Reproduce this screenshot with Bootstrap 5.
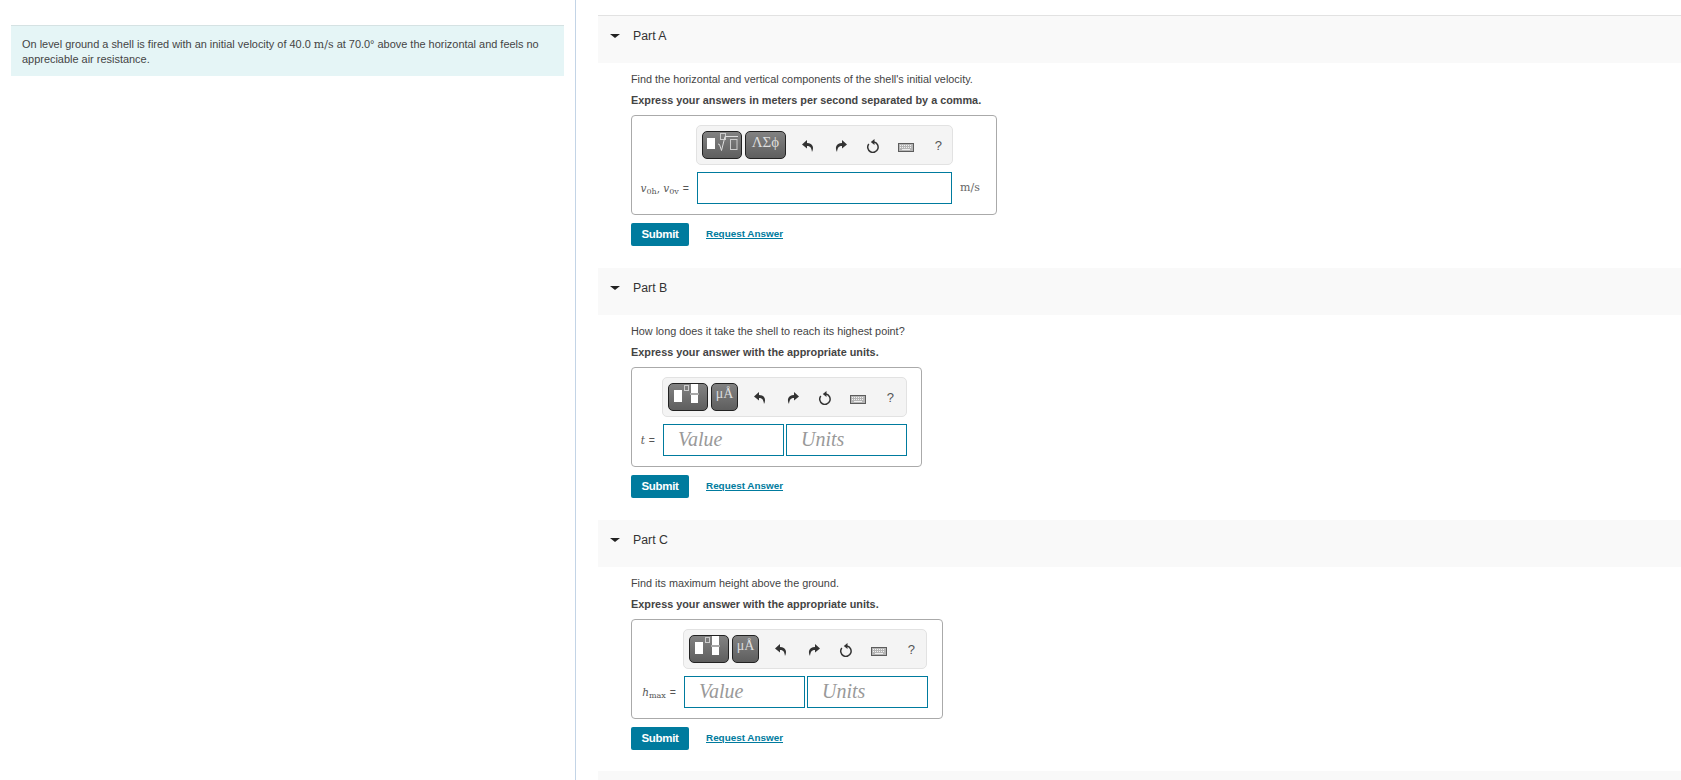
<!DOCTYPE html>
<html lang="en">
<head>
    <meta charset="UTF-8">
    <meta name="viewport" content="width=device-width, initial-scale=1.0">
    <title>Part A</title>
    <link rel="stylesheet" href="https://cdn.jsdelivr.net/npm/bootstrap@5.3.0/dist/css/bootstrap.min.css">
    <style>
        html, body { height: 100%; overflow: hidden; }
        body { font-family: "Liberation Sans", Arial, sans-serif; font-size: 12px; line-height: 16px; color: #333; background: #fff; }
        .sheet { height: 780px; }
        .left-pane { width: 576px; flex: none; padding: 25px 11px 0; border-right: 1px solid #c3d4e6; }
        .intro { background: #e5f5f6; border-top: 1px solid #d5e2e3; padding: 11px 11px 9px; height: 51px; color: #444; font-size: 10.95px; line-height: 14px; }
        .right-pane { flex: 1 1 auto; padding: 15px 0 0 22px; min-width: 0; }
        .first-part { border-top: 1px solid #e2e2e2; }
        .part-head { background: #f9f9f9; height: 47px; padding: 0 0 8px 12px; font-size: 12.3px; }
        .caret-down { width: 0; height: 0; border-left: 5px solid transparent; border-right: 5px solid transparent; border-top: 4.5px solid #222; margin-right: 13px; }
        .part-body { padding: 8px 0 22px 33px; }
        .part-body.tight { padding-bottom: 21px; }
        .part-body p { margin: 0 0 5px; font-size: 10.85px; color: #444; }
        .part-body p.how { font-weight: 700; margin-bottom: 6px; }
        .answer-box { border: 1px solid #aaa; border-radius: 4px; padding: 9px 0 10px 0; margin-top: 7px; }
        .answer-a { width: 366px; }
        .answer-b { width: 291px; }
        .answer-c { width: 312px; }
        .tools { height: 40px; width: 257px; background: #f4f4f4; border: 1px solid #e2e2e2; border-radius: 5px; padding: 0 5px; }
        .answer-a .tools { margin-left: 64px; }
        .answer-b .tools { width: 245px; margin-left: 30px; }
        .answer-c .tools { width: 244px; margin-left: 51px; }
        .tpl-btn { height: 28px; width: 40px; padding: 0; border: 1px solid #222; border-radius: 5px; background: linear-gradient(#828282, #5e5e5e); display: flex; align-items: flex-start; justify-content: center; color: #ddd; font-family: "Liberation Serif", serif; font-size: 15px; line-height: 20px; margin-right: 3px; flex: none; }
        .tpl-btn.narrow { width: 27px; font-size: 14px; }
        .tpl-btn.wide { width: 41px; }
        .tool-icons { margin-left: 3px; padding-top: 2px; }
        .tool-slot { width: 32.5px; flex: none; }
        .tool-slot svg { display: block; }
        .kb-icon { margin-top: 3px; }
        .tool-q { font-size: 13px; color: #555; }
        .ans-row { margin-top: 7px; }
        .ans-label { font-family: "DejaVu Serif", serif; font-size: 10.5px; color: #555; text-align: right; padding-right: 8px; white-space: nowrap; flex: none; }
        .ans-label sub { font-size: 8px; bottom: -.25em; font-style: normal; }
        .ans-eq { font-family: "Liberation Sans", sans-serif; margin-left: 4px; }
        .label-a { width: 65px; }
        .label-b { width: 31px; }
        .label-c { width: 52px; }
        .ans-input { height: 32px; border: 1px solid #007b9e; border-radius: 0; padding: 0 14px; font-family: "Liberation Serif", serif; font-style: italic; font-size: 20px; line-height: 28px; color: #999; background: #fff; flex: none; }
        .ans-input.whole { width: 255px; }
        .ans-input.half { width: 121px; }
        .ans-input.half + .ans-input.half { margin-left: 2px; }
        .ans-unit { font-family: "DejaVu Serif", serif; font-size: 11px; color: #666; margin-left: 8px; }
        .submit-btn { background: #007b9e; border: 0; border-radius: 2px; color: #fff; font-size: 11.5px; font-weight: 700; letter-spacing: -.3px; line-height: 16px; padding: 3px 0 5px; width: 58px; height: 23px; }
        .submit-btn:hover { background: #00698a; color: #fff; }
        .req-link { color: #007b9e; font-weight: 700; font-size: 9.9px; margin: 0 0 2px 17px; text-decoration: underline; }
        .math { font-family: "DejaVu Serif", serif; font-size: 11px; }
    </style>
</head>
<body>

    <!-- shared toolbar icons -->
    <svg width="0" height="0" class="position-absolute">
        <symbol id="ic-undo" viewBox="0 0 12 12"><path d="M5 0 0 4.500 5 8.500V6C8 6 9.500 7.500 10 12 12 8.500 11.500 3 5 3z" fill="#333"/></symbol>
        <symbol id="ic-redo" viewBox="0 0 12 12"><path d="M7 0l5 4.500L7 8.500V6C4 6 2.500 7.500 2 12 0 8.500 .5 3 7 3z" fill="#333"/></symbol>
        <symbol id="ic-reset" viewBox="0 0 14 14"><path d="M8 3.100A5.200 5.200 0 1 1 2.800 5" fill="none" stroke="#333" stroke-width="1.500"/><path d="M8.500 0v6L4.800 3z" fill="#333"/></symbol>
        <symbol id="ic-keys" viewBox="0 0 16 9"><rect x=".5" y=".5" width="15" height="8" fill="#b5b5b5" stroke="#5c5c5c"/><path d="M2 2.500h12M2 4.500h12" stroke="#f2f2f2" stroke-width="1" stroke-dasharray="1 1"/><path d="M4 6.500h8" stroke="#eee"/></symbol>
        <symbol id="ic-radical" viewBox="0 0 38 26"><rect x="4" y="6" width="8" height="11" fill="#fff"/><rect x="17.500" y="1.500" width="5" height="6" fill="none" stroke="#ccc"/><path d="M15 12l1.500 .5 2 6 3.500-14h13" fill="none" stroke="#ddd"/><rect x="27.500" y="7.500" width="6.500" height="10" fill="none" stroke="#ccc"/></symbol>
        <symbol id="ic-frac" viewBox="0 0 38 26"><rect x="5" y="6" width="8" height="12" fill="#fff"/><rect x="15.500" y="1.500" width="4" height="5" fill="none" stroke="#ccc"/><rect x="22" y="0" width="7" height="9" fill="#fff"/><path d="M21 10h9" stroke="#ddd"/><rect x="22" y="11" width="7" height="8" fill="#fff"/></symbol>
    </svg>

    <div class="d-flex sheet">
        <div class="left-pane">
            <div class="intro">On level ground a shell is fired with an initial velocity of 40.0 <span class="math">m/s</span> at 70.0° above the horizontal and feels no appreciable air resistance.</div>
        </div>

        <div class="right-pane">

            <!-- Part A -->
            <div class="first-part">
                <div class="part-head d-flex align-items-center"><span class="caret-down"></span><span>Part A</span></div>
                <div class="part-body">
                    <p>Find the horizontal and vertical components of the shell's initial velocity.</p>
                    <p class="how">Express your answers in meters per second separated by a comma.</p>
                    <div class="answer-box answer-a">
                        <div class="tools d-flex align-items-center">
                            <button type="button" class="tpl-btn"><svg width="38" height="26"><use href="#ic-radical"/></svg></button>
                            <button type="button" class="tpl-btn wide">ΛΣϕ</button>
                            <div class="tool-icons d-flex align-items-center">
                                <div class="tool-slot d-flex justify-content-center"><svg width="12" height="12"><use href="#ic-undo"/></svg></div>
                                <div class="tool-slot d-flex justify-content-center"><svg width="12" height="12"><use href="#ic-redo"/></svg></div>
                                <div class="tool-slot d-flex justify-content-center"><svg width="14" height="14"><use href="#ic-reset"/></svg></div>
                                <div class="tool-slot d-flex justify-content-center"><svg class="kb-icon" width="16" height="9"><use href="#ic-keys"/></svg></div>
                                <div class="tool-slot d-flex justify-content-center tool-q">?</div>
                            </div>
                        </div>
                        <div class="ans-row d-flex align-items-center">
                            <div class="ans-label label-a"><i>v</i><sub>0h</sub>, <i>v</i><sub>0v</sub><span class="ans-eq">=</span></div>
                            <div class="ans-input whole"></div>
                            <span class="ans-unit">m/s</span>
                        </div>
                    </div>
                    <div class="d-flex align-items-center mt-2">
                        <button type="button" class="btn submit-btn">Submit</button>
                        <a href="#" class="req-link">Request Answer</a>
                    </div>
                </div>
            </div>

            <!-- Part B -->
            <div>
                <div class="part-head d-flex align-items-center"><span class="caret-down"></span><span>Part B</span></div>
                <div class="part-body">
                    <p>How long does it take the shell to reach its highest point?</p>
                    <p class="how">Express your answer with the appropriate units.</p>
                    <div class="answer-box answer-b">
                        <div class="tools d-flex align-items-center">
                            <button type="button" class="tpl-btn"><svg width="38" height="26"><use href="#ic-frac"/></svg></button>
                            <button type="button" class="tpl-btn narrow">μÅ</button>
                            <div class="tool-icons d-flex align-items-center">
                                <div class="tool-slot d-flex justify-content-center"><svg width="12" height="12"><use href="#ic-undo"/></svg></div>
                                <div class="tool-slot d-flex justify-content-center"><svg width="12" height="12"><use href="#ic-redo"/></svg></div>
                                <div class="tool-slot d-flex justify-content-center"><svg width="14" height="14"><use href="#ic-reset"/></svg></div>
                                <div class="tool-slot d-flex justify-content-center"><svg class="kb-icon" width="16" height="9"><use href="#ic-keys"/></svg></div>
                                <div class="tool-slot d-flex justify-content-center tool-q">?</div>
                            </div>
                        </div>
                        <div class="ans-row d-flex align-items-center">
                            <div class="ans-label label-b"><i>t</i><span class="ans-eq">=</span></div>
                            <div class="ans-input half">Value</div>
                            <div class="ans-input half">Units</div>
                        </div>
                    </div>
                    <div class="d-flex align-items-center mt-2">
                        <button type="button" class="btn submit-btn">Submit</button>
                        <a href="#" class="req-link">Request Answer</a>
                    </div>
                </div>
            </div>

            <!-- Part C -->
            <div>
                <div class="part-head d-flex align-items-center"><span class="caret-down"></span><span>Part C</span></div>
                <div class="part-body tight">
                    <p>Find its maximum height above the ground.</p>
                    <p class="how">Express your answer with the appropriate units.</p>
                    <div class="answer-box answer-c">
                        <div class="tools d-flex align-items-center">
                            <button type="button" class="tpl-btn"><svg width="38" height="26"><use href="#ic-frac"/></svg></button>
                            <button type="button" class="tpl-btn narrow">μÅ</button>
                            <div class="tool-icons d-flex align-items-center">
                                <div class="tool-slot d-flex justify-content-center"><svg width="12" height="12"><use href="#ic-undo"/></svg></div>
                                <div class="tool-slot d-flex justify-content-center"><svg width="12" height="12"><use href="#ic-redo"/></svg></div>
                                <div class="tool-slot d-flex justify-content-center"><svg width="14" height="14"><use href="#ic-reset"/></svg></div>
                                <div class="tool-slot d-flex justify-content-center"><svg class="kb-icon" width="16" height="9"><use href="#ic-keys"/></svg></div>
                                <div class="tool-slot d-flex justify-content-center tool-q">?</div>
                            </div>
                        </div>
                        <div class="ans-row d-flex align-items-center">
                            <div class="ans-label label-c"><i>h</i><sub>max</sub><span class="ans-eq">=</span></div>
                            <div class="ans-input half">Value</div>
                            <div class="ans-input half">Units</div>
                        </div>
                    </div>
                    <div class="d-flex align-items-center mt-2">
                        <button type="button" class="btn submit-btn">Submit</button>
                        <a href="#" class="req-link">Request Answer</a>
                    </div>
                </div>
            </div>

            <div class="part-head"></div>
        </div>
    </div>

</body>
</html>
